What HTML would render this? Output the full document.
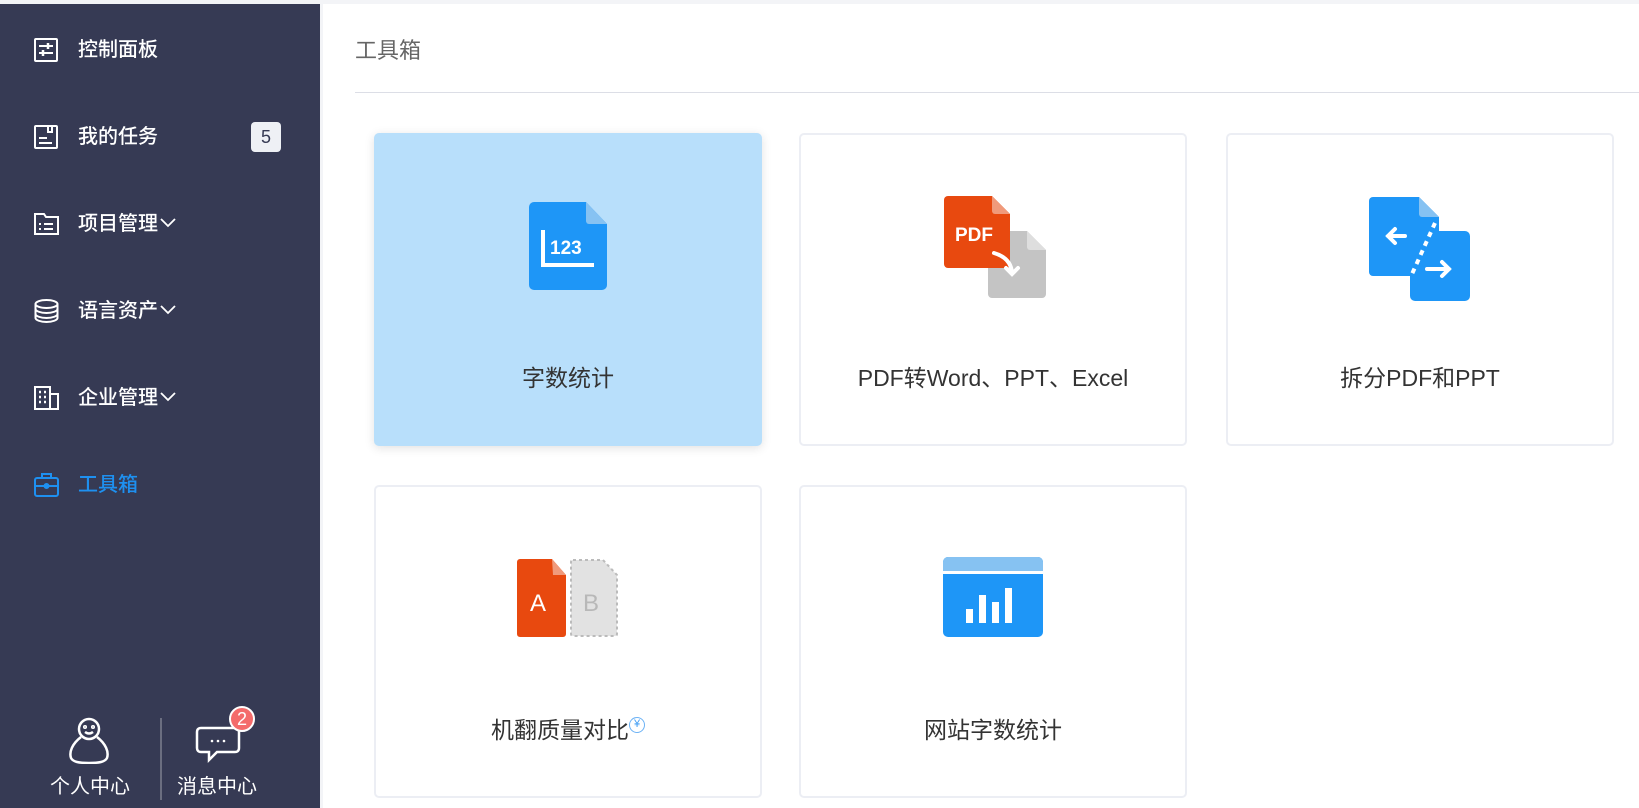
<!DOCTYPE html>
<html><head><meta charset="utf-8"><style>
*{margin:0;padding:0;box-sizing:border-box}
body{width:1639px;height:808px;overflow:hidden;background:#f3f4f7;font-family:"Liberation Sans","Noto Sans CJK SC",sans-serif;position:relative}
.side{position:absolute;left:0;top:4px;width:320px;height:804px;background:#363a54}
.item{position:absolute;left:0;width:320px;height:40px;color:#fff;font-size:20px;line-height:40px;font-weight:500}
.item svg{position:absolute;left:34px;top:8px}
.item span{position:absolute;left:78px}
.item svg.chev{position:static;display:inline-block;vertical-align:middle;margin-left:2px;margin-top:-3px}
.badge{position:absolute;left:251px;top:5px;width:30px;height:30px;border-radius:4px;background:#eef0f5;color:#363a54;font-size:18px;line-height:30px;text-align:center}
.main{position:absolute;left:323px;top:4px;width:1316px;height:804px;background:#fff}
.title{position:absolute;left:355px;top:33px;font-size:22px;color:#666}
.hr{position:absolute;left:355px;top:92px;width:1284px;height:1px;background:#dcdee6}
.card{position:absolute;width:388px;height:313px;border:2px solid #eceef4;border-radius:5px;background:#fff}
.card .t{position:absolute;left:0;width:100%;text-align:center;top:228px;font-size:23px;color:#333;line-height:30px}
.card svg{position:absolute}
.b{position:absolute;color:#fff;font-size:20px}
</style></head><body>
<div class="side">
 <div class="item" style="top:26px"><svg width="24" height="24" viewBox="0 0 24 24" fill="none" stroke="#fff" stroke-width="2"><rect x="1" y="1" width="22" height="22" rx="1"/><path d="M5 8h14M5 15h14"/><path d="M14 5v6M9 12v6" stroke-width="2.5"/></svg><span>控制面板</span></div>
 <div class="item" style="top:113px"><svg width="24" height="24" viewBox="0 0 24 24" fill="none" stroke="#fff" stroke-width="2"><rect x="1" y="1" width="22" height="22" rx="1"/><path d="M14 1v6h4V1M5 13h8M5 18h13"/></svg><span>我的任务</span><div class="badge">5</div></div>
 <div class="item" style="top:200px"><svg width="25" height="24" viewBox="0 0 25 24" fill="none" stroke="#fff" stroke-width="2"><path d="M1 2h9l2 3h12v17H1z"/><path d="M5 12h2M10 12h9M5 17h2M10 17h9"/></svg><span>项目管理<svg class="chev" width="16" height="10" viewBox="0 0 16 10" fill="none" stroke="#fff" stroke-width="1.8"><path d="M1 1l7 7 7-7"/></svg></span></div>
 <div class="item" style="top:287px"><svg width="25" height="24" viewBox="0 0 25 24" fill="none" stroke="#fff" stroke-width="2"><ellipse cx="12.5" cy="5" rx="11" ry="4"/><path d="M1.5 5v14c0 2 5 4 11 4s11-2 11-4V5M1.5 10c0 2 5 4 11 4s11-2 11-4M1.5 15c0 2 5 4 11 4s11-2 11-4"/></svg><span>语言资产<svg class="chev" width="16" height="10" viewBox="0 0 16 10" fill="none" stroke="#fff" stroke-width="1.8"><path d="M1 1l7 7 7-7"/></svg></span></div>
 <div class="item" style="top:374px"><svg width="25" height="24" viewBox="0 0 25 24" fill="none" stroke="#fff" stroke-width="2"><path d="M1 1h15v22H1zM16 8h8v15h-8"/><path d="M5 6h2M10 6h2M5 11h2M10 11h2M5 16h2M10 16h2" stroke-width="2.5"/></svg><span>企业管理<svg class="chev" width="16" height="10" viewBox="0 0 16 10" fill="none" stroke="#fff" stroke-width="1.8"><path d="M1 1l7 7 7-7"/></svg></span></div>
 <div class="item" style="top:461px;color:#1e90f0"><svg width="25" height="24" viewBox="0 0 25 24" fill="none" stroke="#1e90f0" stroke-width="2"><rect x="1" y="5" width="23" height="18" rx="2"/><path d="M8 5V1h9v4M1 13h23"/><circle cx="12.5" cy="13" r="2" fill="#1e90f0"/></svg><span>工具箱</span></div>
 <svg style="position:absolute;left:66px;top:712px" width="46" height="48" viewBox="0 0 46 48" fill="none" stroke="#fff" stroke-width="2.5"><circle cx="23" cy="13" r="10"/><path d="M15 21C6 28 3 36 5 42c2 4 8 5 18 5s16-1 18-5c2-6-1-14-10-21"/><path d="M19 16q4 3 8 0"/><circle cx="19" cy="11" r="0.8"/><circle cx="27" cy="11" r="0.8"/></svg>
 <div class="b" style="left:50px;top:766px">个人中心</div>
 <div style="position:absolute;left:160px;top:714px;width:2px;height:82px;background:#6b6e80"></div>
 <svg style="position:absolute;left:195px;top:712px" width="48" height="48" viewBox="0 0 48 48" fill="none" stroke="#fff" stroke-width="2.5"><path d="M6 12h34c3 0 4 2 4 4v16c0 3-2 4-4 4H22l-8 8v-8H6c-3 0-4-2-4-4V16c0-3 2-4 4-4z"/><circle cx="17" cy="25" r="1.3" fill="#fff" stroke="none"/><circle cx="23" cy="25" r="1.3" fill="#fff" stroke="none"/><circle cx="29" cy="25" r="1.3" fill="#fff" stroke="none"/></svg>
 <div style="position:absolute;left:229px;top:702px;width:26px;height:26px;border-radius:50%;background:#f46b6b;border:2px solid #fff;color:#fff;font-size:18px;line-height:22px;text-align:center">2</div>
 <div class="b" style="left:177px;top:766px">消息中心</div>
</div>
<div class="main"></div>
<div class="title">工具箱</div>
<div class="hr"></div>

<div class="card" style="left:374px;top:133px;background:#b8dffb;border-color:#b8dffb;box-shadow:0 2px 10px rgba(0,0,0,.12)">
 <svg style="left:153px;top:67px" width="78" height="88" viewBox="0 0 78 88"><path d="M5 0h52l21 22v61a5 5 0 0 1-5 5H5a5 5 0 0 1-5-5V5a5 5 0 0 1 5-5z" fill="#1e96f7"/><path d="M57 0l21 22H60a3 3 0 0 1-3-3z" fill="#86c2f2"/><path d="M14 28v35h51" stroke="#fff" stroke-width="4" fill="none"/><text x="21" y="52" fill="#fff" font-size="19" font-weight="bold" font-family="Liberation Sans">123</text></svg>
 <div class="t">字数统计</div>
</div>
<div class="card" style="left:799px;top:133px">
 <svg style="left:143px;top:61px" width="102" height="102" viewBox="0 0 102 102"><path d="M44 35h39l19 19v44a4 4 0 0 1-4 4H48a4 4 0 0 1-4-4z" fill="#c4c4c4"/><path d="M83 35l19 19H86a3 3 0 0 1-3-3z" fill="#dedede"/><path d="M4 0h44l18 18v50a4 4 0 0 1-4 4H4a4 4 0 0 1-4-4V4a4 4 0 0 1 4-4z" fill="#e8490f"/><path d="M48 0l18 18H51a3 3 0 0 1-3-3z" fill="#f09a7b"/><text x="11" y="45" fill="#fff" font-size="19" font-weight="bold" font-family="Liberation Sans">PDF</text><path d="M50 57q17 5 18 20M62 72l6 6 6-6" stroke="#fff" stroke-width="4" fill="none" stroke-linecap="round"/></svg>
 <div class="t">PDF转Word、PPT、Excel</div>
</div>
<div class="card" style="left:1226px;top:133px">
 <svg style="left:141px;top:62px" width="101" height="104" viewBox="0 0 101 104"><path d="M4 0h46l20 20v55a4 4 0 0 1-4 4H4a4 4 0 0 1-4-4V4a4 4 0 0 1 4-4z" fill="#1e96f7"/><path d="M50 0l20 20H53a3 3 0 0 1-3-3z" fill="#86c2f2"/><rect x="41" y="34" width="60" height="70" rx="5" fill="#1e96f7"/><path d="M66 26L43 77" stroke="#fff" stroke-width="4" stroke-dasharray="5 5"/><path d="M36 39H19M26 32l-7 7 7 7M58 72h22M73 65l7 7-7 7" stroke="#fff" stroke-width="4" fill="none" stroke-linecap="round"/></svg>
 <div class="t">拆分PDF和PPT</div>
</div>
<div class="card" style="left:374px;top:485px">
 <svg style="left:141px;top:72px" width="102" height="78" viewBox="0 0 102 78"><path d="M3 0h32l14 16v59a3 3 0 0 1-3 3H3a3 3 0 0 1-3-3V3a3 3 0 0 1 3-3z" fill="#e8490f"/><path d="M35 0l14 16H36z" fill="#f09a7b"/><text x="13" y="52" fill="#fff" font-size="24" font-family="Liberation Sans">A</text><path d="M56 1h30l14 15v59a2 2 0 0 1-2 2H56a2 2 0 0 1-2-2V3a2 2 0 0 1 2-2z" fill="#e2e2e2" stroke="#bbb" stroke-width="2" stroke-dasharray="3 3"/><text x="66" y="52" fill="#b8b8b8" font-size="24" font-family="Liberation Sans">B</text></svg>
 <div class="t">机翻质量对比<span style="display:inline-block;width:16px;height:16px;border:1.5px solid #6cb2f5;border-radius:50%;color:#3d9cf5;font-size:11px;line-height:13px;vertical-align:top;margin-top:2px">¥</span></div>
</div>
<div class="card" style="left:799px;top:485px">
 <svg style="left:142px;top:70px" width="100" height="80" viewBox="0 0 100 80"><rect y="0" width="100" height="80" rx="5" fill="#1e96f7"/><path d="M5 0h90a5 5 0 0 1 5 5v9H0V5a5 5 0 0 1 5-5z" fill="#86c2f2"/><rect y="14" width="100" height="3" fill="#fff"/><rect x="23" y="52" width="7" height="14" fill="#fff"/><rect x="36" y="38" width="7" height="28" fill="#fff"/><rect x="49" y="45" width="7" height="21" fill="#fff"/><rect x="62" y="31" width="7" height="35" fill="#fff"/></svg>
 <div class="t">网站字数统计</div>
</div>
</body></html>
